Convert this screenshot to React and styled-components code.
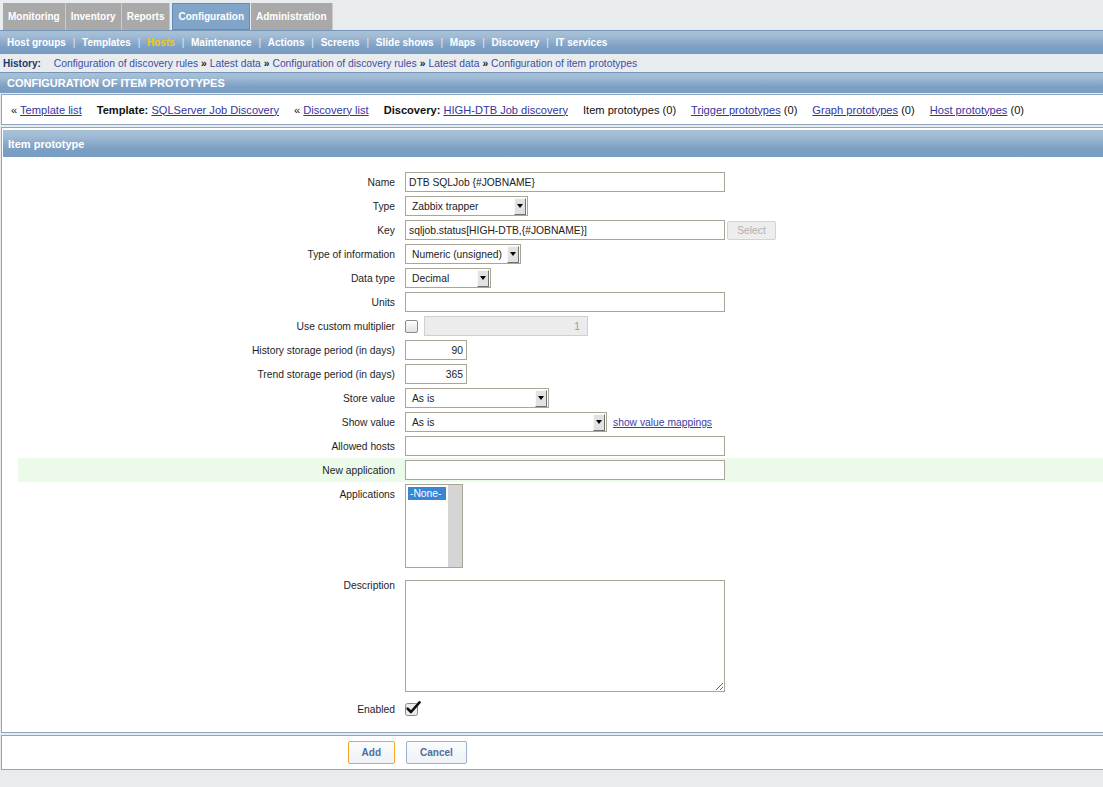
import React from 'react';
import styled, { createGlobalStyle, css } from 'styled-components';

const GlobalStyle = createGlobalStyle`
  html, body { margin: 0; padding: 0; background: #e9ecef; overflow: hidden; }
  body { font-family: "Liberation Sans", Arial, sans-serif; font-size: 10.3px; color: #222; }
  * { box-sizing: border-box; }
`;

const barGradient = css`
  background: linear-gradient(to bottom, #a7c1d8 0%, #a1bbd4 22%, #7da0c5 68%, #789dc2 100%);
  border-top: 1px solid #7594b8;
`;

const Page = styled.div`
  min-width: 1124px;
  padding-top: 3px;
`;

const Tabs = styled.nav`
  display: flex;
  height: 27px;
  padding-left: 3px;
`;

const Tab = styled.a`
  display: flex;
  align-items: center;
  padding: 0 5px;
  font-size: 10px;
  font-weight: bold;
  color: #fff;
  text-decoration: none;
  background: #a9a9a9;
  border-right: 1px solid #cacaca;
  ${p => p.$active && css`
    background: #81a5c9;
    border: 1px solid #618dba;
    margin-left: 2px;
    margin-right: 1px;
  `}
`;

const SubNav = styled.nav`
  ${barGradient}
  height: 24px;
  display: flex;
  align-items: center;
  padding-left: 7px;
  font-size: 10px;
  font-weight: bold;
  color: #fff;
`;

const SubItem = styled.a`
  color: ${p => (p.$current ? '#f6c812' : '#fff')};
  text-decoration: none;
`;

const Sep = styled.span`
  color: #e1e8f0;
  font-weight: normal;
  margin: 0 6.8px;
`;

const HistoryBar = styled.div`
  height: 18px;
  display: flex;
  align-items: center;
  padding-left: 3px;
`;

const HistoryLabel = styled.b`
  font-size: 10px;
  color: #1c3665;
  margin-right: 13px;
`;

const HistLink = styled.a`
  color: #3d4f9f;
  text-decoration: none;
`;

const Raquo = styled.b`
  color: #222;
  margin: 0 3px;
`;

const TitleBar = styled.div`
  ${barGradient}
  height: 21px;
  display: flex;
  align-items: center;
  padding-left: 7px;
  font-size: 11px;
  font-weight: bold;
  color: #fff;
  text-transform: uppercase;
`;

const Panel = styled.section`
  margin: ${p => p.$top || 2}px 0 0 1px;
  background: #fff;
  border: 1px solid #8fa6c3;
  padding: ${p => p.$pad || '0'};
`;

const Crumbs = styled.div`
  height: 29px;
  display: flex;
  align-items: center;
  gap: 15px;
  padding-left: 9px;
  font-size: 11.1px;
  color: #111;
`;

const Crumb = styled.span`
  white-space: nowrap;
`;

const Link = styled.a`
  color: #35359c;
  text-decoration: underline;
  cursor: pointer;
`;

const PanelHeader = styled.div`
  ${barGradient}
  border-top: none;
  height: 27px;
  display: flex;
  align-items: center;
  padding-left: 5px;
  font-size: 11px;
  font-weight: bold;
  color: #fff;
`;

const FormGrid = styled.div`
  margin-left: 15px;
  padding: ${p => p.$pad};
`;

const Row = styled.div`
  display: grid;
  grid-template-columns: 382px 1fr;
  padding: 2px 0;
  margin-top: ${p => p.$mt || 0}px;
  background: ${p => (p.$highlight ? '#ecfbe9' : 'transparent')};
`;

const Label = styled.div`
  text-align: right;
  padding: 1px 5px 0 0;
  line-height: 19px;
  height: 20px;
  color: #1e1e1e;
  white-space: nowrap;
`;

const Field = styled.div`
  display: flex;
  align-items: ${p => (p.$top ? 'flex-start' : 'center')};
  padding-left: 5px;
  min-height: 20px;
`;

const TextInput = styled.input`
  width: ${p => p.$w}px;
  height: 20px;
  border: 1px solid #aaa697;
  background: #fff;
  padding: 0 3px;
  font: inherit;
  color: #222;
  text-align: ${p => (p.$right ? 'right' : 'left')};
  outline: none;
  &:disabled {
    background: #ececec;
    border-color: #d0d0d0;
    color: #9a9a9a;
    padding-right: 7px;
  }
`;

const SelectBox = styled.div`
  width: ${p => p.$w}px;
  height: 20px;
  border: 1px solid #aaa697;
  background: #fff;
  display: flex;
  align-items: center;
  justify-content: space-between;
  padding: 0 1px 0 6px;
  color: #222;
`;

const Arrow = styled.span`
  width: 12px;
  height: 17px;
  background: #e2e2e2;
  border-style: solid;
  border-width: 1px;
  border-color: #f8f8f8 #707070 #707070 #f8f8f8;
  display: flex;
  align-items: center;
  justify-content: center;
  &::after {
    content: '';
    border-left: 3px solid transparent;
    border-right: 3px solid transparent;
    border-top: 4px solid #000;
  }
`;

const SmallButton = styled.button`
  width: 49px;
  height: 19px;
  border: 1px solid #d3d3d3;
  border-radius: 2px;
  background: #ededed;
  color: #b0b0b0;
  font: inherit;
  margin-left: 2px;
  padding: 0;
`;

const Check = styled.input.attrs({ type: 'checkbox' })`
  appearance: none;
  width: 13px;
  height: 13px;
  margin: 0 6px 0 0;
  border: 1px solid #8b8b8b;
  border-radius: 2px;
  background: linear-gradient(#fdfdfd, #e2e2e2);
`;

const MapLink = styled(Link)`
  color: #3e3ea6;
  margin-left: 6px;
  font-size: 10.3px;
`;

const ListBox = styled.div`
  width: 58px;
  height: 84px;
  border: 1px solid #aaa697;
  background: #fff;
  display: flex;
`;

const ListItems = styled.div`
  flex: 1;
  padding: 2px 2px;
`;

const Option = styled.div`
  height: 13px;
  line-height: 13px;
  padding-left: 2px;
  background: ${p => (p.$selected ? '#3a86d4' : 'transparent')};
  color: ${p => (p.$selected ? '#fff' : '#222')};
`;

const ScrollTrack = styled.div`
  width: 14px;
  background: #d5d5d5;
`;

const TextArea = styled.textarea`
  width: 320px;
  height: 112px;
  border: 1px solid #aaa697;
  background: #fff;
  font: inherit;
  margin: 5px 0 0;
  display: block;
`;

const CheckWrap = styled.span`
  display: flex;
  margin-top: -3px;
`;

const Footer = styled.div`
  display: grid;
  grid-template-columns: 382px 1fr;
  margin-left: 15px;
  padding: 5px 0 5px;
`;

const FooterLeft = styled.div`
  display: flex;
  justify-content: flex-end;
  padding-right: 5px;
`;

const FooterRight = styled.div`
  display: flex;
  padding-left: 6px;
`;

const Button = styled.button`
  height: 23px;
  padding: 0 ${p => p.$px}px;
  border: 1px solid ${p => (p.$focus ? '#f6a530' : '#9bb0cb')};
  border-radius: 2px;
  background: linear-gradient(#fbfcfd, #eef2f6);
  color: ${p => (p.$focus ? '#4a70a6' : '#4f6d9c')};
  font-family: "Liberation Sans", Arial, sans-serif;
  font-size: 10px;
  font-weight: bold;
`;

const CheckedIcon = () => (
  <svg width="17" height="16" viewBox="0 0 17 16">
    <rect x="0.5" y="3.5" width="12" height="12" rx="2" fill="#ececec" stroke="#8a8a8a" />
    <path d="M2.6 8.6 L6 12 L14.5 2.3" fill="none" stroke="#111" strokeWidth="2.6" strokeLinecap="round" strokeLinejoin="round" />
  </svg>
);

const subItems = ['Host groups', 'Templates', 'Hosts', 'Maintenance', 'Actions', 'Screens', 'Slide shows', 'Maps', 'Discovery', 'IT services'];
const history = ['Configuration of discovery rules', 'Latest data', 'Configuration of discovery rules', 'Latest data', 'Configuration of item prototypes'];

const SimpleRow = ({ label, children, highlight, mt }) => (
  <Row $highlight={highlight} $mt={mt}>
    <Label>{label}</Label>
    <Field>{children}</Field>
  </Row>
);

const Select = ({ w, value }) => (
  <SelectBox $w={w}>
    <span>{value}</span>
    <Arrow />
  </SelectBox>
);

export default function App() {
  return (
    <Page>
      <GlobalStyle />
      <Tabs>
        <Tab>Monitoring</Tab>
        <Tab>Inventory</Tab>
        <Tab>Reports</Tab>
        <Tab $active>Configuration</Tab>
        <Tab>Administration</Tab>
      </Tabs>
      <SubNav>
        {subItems.map((s, i) => (
          <React.Fragment key={s}>
            {i > 0 && <Sep>|</Sep>}
            <SubItem $current={s === 'Hosts'}>{s}</SubItem>
          </React.Fragment>
        ))}
      </SubNav>
      <HistoryBar>
        <HistoryLabel>History:</HistoryLabel>
        {history.map((h, i) => (
          <React.Fragment key={i}>
            {i > 0 && <Raquo>»</Raquo>}
            <HistLink>{h}</HistLink>
          </React.Fragment>
        ))}
      </HistoryBar>
      <TitleBar>Configuration of item prototypes</TitleBar>

      <Panel $top={1}>
        <Crumbs>
          <Crumb>« <Link>Template list</Link></Crumb>
          <Crumb><b>Template:</b> <Link>SQLServer Job Discovery</Link></Crumb>
          <Crumb>« <Link>Discovery list</Link></Crumb>
          <Crumb><b>Discovery:</b> <Link>HIGH-DTB Job discovery</Link></Crumb>
          <Crumb>Item prototypes (0)</Crumb>
          <Crumb><Link>Trigger prototypes</Link> (0)</Crumb>
          <Crumb><Link>Graph prototypes</Link> (0)</Crumb>
          <Crumb><Link>Host prototypes</Link> (0)</Crumb>
        </Crumbs>
      </Panel>

      <Panel $pad="2px 0 0 1px">
        <PanelHeader>Item prototype</PanelHeader>
        <FormGrid $pad="13px 0 11px 0">
          <SimpleRow label="Name"><TextInput $w={320} defaultValue="DTB SQLJob {#JOBNAME}" /></SimpleRow>
          <SimpleRow label="Type"><Select w={123} value="Zabbix trapper" /></SimpleRow>
          <SimpleRow label="Key">
            <TextInput $w={320} defaultValue="sqljob.status[HIGH-DTB,{#JOBNAME}]" />
            <SmallButton disabled>Select</SmallButton>
          </SimpleRow>
          <SimpleRow label="Type of information"><Select w={116} value="Numeric (unsigned)" /></SimpleRow>
          <SimpleRow label="Data type"><Select w={86} value="Decimal" /></SimpleRow>
          <SimpleRow label="Units"><TextInput $w={320} /></SimpleRow>
          <SimpleRow label="Use custom multiplier">
            <Check />
            <TextInput $w={164} $right disabled defaultValue="1" />
          </SimpleRow>
          <SimpleRow label="History storage period (in days)"><TextInput $w={62} $right defaultValue="90" /></SimpleRow>
          <SimpleRow label="Trend storage period (in days)"><TextInput $w={62} $right defaultValue="365" /></SimpleRow>
          <SimpleRow label="Store value"><Select w={144} value="As is" /></SimpleRow>
          <SimpleRow label="Show value">
            <Select w={202} value="As is" />
            <MapLink>show value mappings</MapLink>
          </SimpleRow>
          <SimpleRow label="Allowed hosts"><TextInput $w={320} /></SimpleRow>
          <SimpleRow label="New application" highlight><TextInput $w={320} /></SimpleRow>
          <Row>
            <Label>Applications</Label>
            <Field $top>
              <ListBox>
                <ListItems><Option $selected>-None-</Option></ListItems>
                <ScrollTrack />
              </ListBox>
            </Field>
          </Row>
          <Row $mt={3}>
            <Label>Description</Label>
            <Field $top><TextArea /></Field>
          </Row>
          <SimpleRow label="Enabled" mt={3}><CheckWrap><CheckedIcon /></CheckWrap></SimpleRow>
        </FormGrid>
      </Panel>

      <Panel $pad="0 0 0 1px">
        <Footer>
          <FooterLeft><Button $focus $px={13}>Add</Button></FooterLeft>
          <FooterRight><Button $px={13}>Cancel</Button></FooterRight>
        </Footer>
      </Panel>
    </Page>
  );
}
